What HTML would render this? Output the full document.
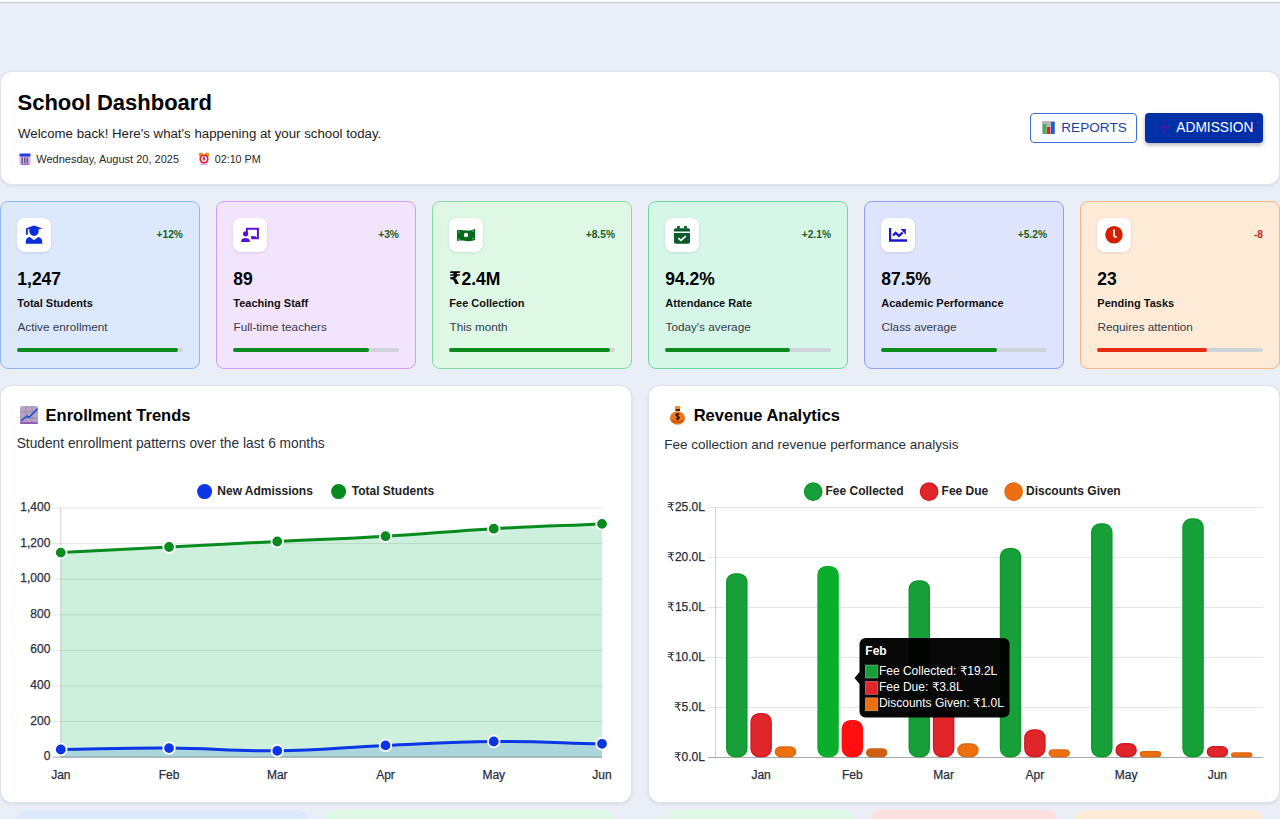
<!DOCTYPE html>
<html><head><meta charset="utf-8"><title>School Dashboard</title>
<style>
*{box-sizing:border-box;margin:0;padding:0}
html,body{width:1280px;height:819px;overflow:hidden;background:#eaeef6;font-family:"Liberation Sans",sans-serif}
.t{position:absolute;white-space:nowrap}
.abs{position:absolute}
.card{position:absolute;background:#fff;border-radius:12px;border:1px solid #dfe3ea;box-shadow:0 1px 3px rgba(20,30,60,.10)}
.stat{position:absolute;top:201px;width:200px;height:168px;border-radius:8px;border:1px solid}
.ib{position:absolute;top:16px;left:16px;width:34px;height:34px;border-radius:8px;background:#fff;box-shadow:0 1px 3px rgba(0,0,0,.10)}
.ib svg{position:absolute;left:0;top:0;width:34px;height:34px}
.trk{position:absolute;left:16px;top:146px;width:166px;height:4px;border-radius:2px;background:#cfd3da}
.fil{position:absolute;left:0;top:0;height:4px;border-radius:2px}
.rp{display:inline-block;height:0.75em;vertical-align:baseline;fill:currentColor;overflow:visible}
</style></head>
<body>
<svg width="0" height="0" style="position:absolute"><defs><path id="rr" d="M106 -1370 161 -1493H1199L1144 -1370H790Q869 -1292 890 -1163H1199L1144 -1040H898Q893 -914 832 -829Q767 -736 642 -700Q707 -678 768 -606Q827 -538 892 -408L1097 0H880L689 -383Q614 -534 546 -582Q476 -631 356 -631H136V-797H390Q536 -797 610 -864Q678 -926 684 -1040H106L161 -1163H673Q655 -1230 610 -1282Q536 -1370 390 -1370Z"/><path id="rb" d="M103 -1298 191 -1493H1325L1239 -1298H923Q955 -1242 967 -1168H1325L1239 -973H962Q945 -896 902 -838Q830 -743 686 -698Q765 -680 828 -616Q891 -552 954 -424L1163 0H753L571 -371Q516 -483 459.5 -524.0Q403 -565 309 -565H159V-831H362Q483 -831 536 -898Q562 -931 575 -973H103L191 -1168H572Q559 -1205 536 -1234Q483 -1298 362 -1298Z"/></defs></svg>
<div class="abs" style="left:0;top:0;width:1280px;height:2px;background:#fff"></div>
<div class="abs" style="left:0;top:2px;width:1280px;height:1px;background:#c6cad2"></div>
<div class="abs" style="left:0;top:3px;width:1280px;height:1px;background:#e4e8f0"></div>
<div class="card" style="left:0;top:71px;width:1280px;height:114px"></div>
<div class="t" style="top:92.13px;font-size:22px;line-height:22px;font-weight:700;color:#000;left:17.50px;">School Dashboard</div>
<div class="t" style="top:126.78px;font-size:13.25px;line-height:13.25px;font-weight:400;color:#1c1c1c;left:18.00px;">Welcome back! Here's what's happening at your school today.</div>
<svg class="abs" style="left:19px;top:153px" width="12" height="12" viewBox="0 0 12 12">
<rect x="0.5" y="1.5" width="11" height="10" rx="1" fill="#dcb0e8"/>
<rect x="0.5" y="0.5" width="11" height="3" rx="1" fill="#1d3fd8"/>
<rect x="2.5" y="4.5" width="1.5" height="6" fill="#6a5a80"/><rect x="5" y="4.5" width="1.5" height="6" fill="#6a5a80"/><rect x="7.6" y="4.5" width="1.5" height="6" fill="#6a5a80"/>
<rect x="7.6" y="6.5" width="1.6" height="2" fill="#2a70f0"/>
<rect x="2" y="10.8" width="8.5" height="1" fill="#a050d0"/>
</svg>
<div class="t" style="top:154.19px;font-size:11px;line-height:11px;font-weight:400;color:#2a2a2a;left:36.30px;">Wednesday, August 20, 2025</div>
<svg class="abs" style="left:198px;top:152px" width="12" height="13" viewBox="0 0 12 13">
<circle cx="3" cy="2.8" r="2.2" fill="#f08a1a"/><circle cx="9" cy="2.8" r="2.2" fill="#f08a1a"/>
<circle cx="6" cy="7" r="4.6" fill="#ee1c1c"/><circle cx="6" cy="7" r="3" fill="#e8e0f4"/>
<rect x="5.3" y="4.8" width="1.3" height="2.6" fill="#301030"/><rect x="5.4" y="7" width="1.6" height="1.2" fill="#e02020"/>
<rect x="2.5" y="11.6" width="7" height="1" fill="#b070e0"/>
</svg>
<div class="t" style="top:154.40px;font-size:10.75px;line-height:10.75px;font-weight:400;color:#2a2a2a;left:214.70px;">02:10 PM</div>
<div class="abs" style="left:1030px;top:113px;width:107px;height:30px;border:1px solid #3b6fd6;border-radius:4px;background:#fff"></div>
<svg class="abs" style="left:1042px;top:121px" width="13" height="13" viewBox="0 0 13 13">
<rect x="0" y="0" width="13" height="13" rx="1" fill="#b8b4bc"/>
<rect x="1" y="3" width="3.3" height="10" fill="#2cc040"/><rect x="5" y="6" width="3.3" height="7" fill="#e81e2a"/><rect x="9" y="1" width="3.6" height="12" fill="#1060e0"/>
</svg>
<div class="t" style="top:121.29px;font-size:13.6px;line-height:13.6px;font-weight:400;color:#1f3fa0;left:1061.30px;">REPORTS</div>
<div class="abs" style="left:1145px;top:113px;width:118px;height:30px;border-radius:4px;background:#0030a8;box-shadow:0 2px 4px rgba(0,0,0,.3)"></div>
<svg class="abs" style="left:1158px;top:121px" width="13" height="13" viewBox="0 0 13 13">
<rect x="5.5" y="0.5" width="2" height="12" fill="#3a1ca8"/><rect x="0.5" y="5.5" width="12" height="2" fill="#3a1ca8"/>
</svg>
<div class="t" style="top:121.16px;font-size:13.75px;line-height:13.75px;font-weight:400;color:#fff;left:1176.30px;">ADMISSION</div>
<div class="stat" style="left:0px;background:#dce9fc;border-color:#8fb6f6">
<div class="ib"><svg viewBox="0 0 34 34" fill="#0a2ed8" style="color:#0a2ed8"><path d="M8.6 10.4L17 7.6l8.4 2.8L17 12.6z"/><path d="M8.9 10.6h1.9v6.2H8.9z"/><path d="M12.3 11.2h9.4v2a4.7 4.7 0 0 1-9.4 0z"/><path d="M8.8 25.8v-2.6c0-2.2 1.6-3.9 3.9-4.3l4.3 3.4 4.3-3.4c2.3.4 3.9 2.1 3.9 4.3v2.6z"/></svg></div>
<div class="trk"><div class="fil" style="width:161.0px;background:#0b8a1e"></div></div>
</div>
<div class="t" style="top:230.02px;font-size:10.25px;line-height:10.25px;font-weight:700;color:#1b5e20;right:1097.00px;">+12%</div>
<div class="t" style="top:270.59px;font-size:17.5px;line-height:17.5px;font-weight:700;color:#000;left:17.30px;">1,247</div>
<div class="t" style="top:297.79px;font-size:11px;line-height:11px;font-weight:700;color:#111;left:17.30px;">Total Students</div>
<div class="t" style="top:321.00px;font-size:11.75px;line-height:11.75px;font-weight:400;color:#333a48;left:17.50px;">Active enrollment</div>
<div class="stat" style="left:216px;background:#f3e4fd;border-color:#cf9cf6">
<div class="ib"><svg viewBox="0 0 34 34" fill="#5a10d8" style="color:#5a10d8"><path d="M13 9.8h12.9v11.5h-7.6v-2h5.6v-7.5h-9.1v3.4H13z"/><circle cx="12.6" cy="15.8" r="2.6"/><path d="M8.2 23.9v-1.2c0-1.6 2.2-2.7 4.3-2.7s4.3 1.1 4.3 2.7v1.2z"/><path d="M18 18.2h4.8v2.3H18z"/></svg></div>
<div class="trk"><div class="fil" style="width:136.1px;background:#0b8a1e"></div></div>
</div>
<div class="t" style="top:230.02px;font-size:10.25px;line-height:10.25px;font-weight:700;color:#1b5e20;right:881.00px;">+3%</div>
<div class="t" style="top:270.59px;font-size:17.5px;line-height:17.5px;font-weight:700;color:#000;left:233.30px;">89</div>
<div class="t" style="top:297.79px;font-size:11px;line-height:11px;font-weight:700;color:#111;left:233.30px;">Teaching Staff</div>
<div class="t" style="top:321.00px;font-size:11.75px;line-height:11.75px;font-weight:400;color:#333a48;left:233.50px;">Full-time teachers</div>
<div class="stat" style="left:432px;background:#dff8e6;border-color:#86dca0">
<div class="ib"><svg viewBox="0 0 34 34" fill="#076a1a" style="color:#076a1a"><path d="M8 12.2c3-.6 5-.2 9 .2s6 .1 9-1.6v11c-3 1.4-5 1.6-9 1.2s-6-.6-9 0z"/><circle cx="17" cy="17" r="2.2" fill="#fff"/><circle cx="10" cy="14" r=".7" fill="#8de0a0"/><circle cx="24" cy="13" r=".7" fill="#8de0a0"/><circle cx="10" cy="21.3" r=".7" fill="#8de0a0"/><circle cx="24" cy="20.5" r=".7" fill="#8de0a0"/></svg></div>
<div class="trk"><div class="fil" style="width:161.0px;background:#0b8a1e"></div></div>
</div>
<div class="t" style="top:230.02px;font-size:10.25px;line-height:10.25px;font-weight:700;color:#1b5e20;right:665.00px;">+8.5%</div>
<div class="t" style="top:270.59px;font-size:17.5px;line-height:17.5px;font-weight:700;color:#000;left:449.30px;"><svg class="rp" viewBox="0 -1536 1425 1536" style="width:0.6958em"><use href="#rb"/></svg>2.4M</div>
<div class="t" style="top:297.79px;font-size:11px;line-height:11px;font-weight:700;color:#111;left:449.30px;">Fee Collection</div>
<div class="t" style="top:321.00px;font-size:11.75px;line-height:11.75px;font-weight:400;color:#333a48;left:449.50px;">This month</div>
<div class="stat" style="left:648px;background:#d6f7e8;border-color:#6fd69c">
<div class="ib"><svg viewBox="0 0 34 34" fill="#0b5a2a" style="color:#0b5a2a"><path d="M12.1 8h2.7v2.6h-2.7zM19.1 8h2.8v2.6h-2.8z"/><path d="M9 12a1.8 1.8 0 0 1 1.8-1.8h12.4A1.8 1.8 0 0 1 25 12v1.6H9z"/><path d="M9 15h16v9a1.8 1.8 0 0 1-1.8 1.8H10.8A1.8 1.8 0 0 1 9 24z"/><path d="M13.3 20.1l2.6 2.3 4.9-4.3" stroke="#fff" stroke-width="1.7" fill="none"/></svg></div>
<div class="trk"><div class="fil" style="width:124.5px;background:#0b8a1e"></div></div>
</div>
<div class="t" style="top:230.02px;font-size:10.25px;line-height:10.25px;font-weight:700;color:#1b5e20;right:449.00px;">+2.1%</div>
<div class="t" style="top:270.59px;font-size:17.5px;line-height:17.5px;font-weight:700;color:#000;left:665.30px;">94.2%</div>
<div class="t" style="top:297.79px;font-size:11px;line-height:11px;font-weight:700;color:#111;left:665.30px;">Attendance Rate</div>
<div class="t" style="top:321.00px;font-size:11.75px;line-height:11.75px;font-weight:400;color:#333a48;left:665.50px;">Today's average</div>
<div class="stat" style="left:864px;background:#dee4fc;border-color:#8c9ff4">
<div class="ib"><svg viewBox="0 0 34 34" fill="#1818d0" style="color:#1818d0"><path d="M8 9.9h2.2v11.3H26v2.6H8z"/><path d="M12 17.5l2.6-2.6 3.4 3 3.6-3.4" stroke="currentColor" stroke-width="2.3" fill="none"/><path d="M19.6 10.9h5.2v5.9z"/></svg></div>
<div class="trk"><div class="fil" style="width:116.2px;background:#0b8a1e"></div></div>
</div>
<div class="t" style="top:230.02px;font-size:10.25px;line-height:10.25px;font-weight:700;color:#1b5e20;right:233.00px;">+5.2%</div>
<div class="t" style="top:270.59px;font-size:17.5px;line-height:17.5px;font-weight:700;color:#000;left:881.30px;">87.5%</div>
<div class="t" style="top:297.79px;font-size:11px;line-height:11px;font-weight:700;color:#111;left:881.30px;">Academic Performance</div>
<div class="t" style="top:321.00px;font-size:11.75px;line-height:11.75px;font-weight:400;color:#333a48;left:881.50px;">Class average</div>
<div class="stat" style="left:1080px;background:#fdebd8;border-color:#f5b682">
<div class="ib"><svg viewBox="0 0 34 34" fill="#d42000" style="color:#d42000"><circle cx="17" cy="16.8" r="8.8"/><path d="M17 11.6v6.3l2.5 1.6" stroke="#fff" stroke-width="1.8" fill="none"/></svg></div>
<div class="trk"><div class="fil" style="width:109.6px;background:#e82a10"></div></div>
</div>
<div class="t" style="top:230.02px;font-size:10.25px;line-height:10.25px;font-weight:700;color:#c0281c;right:17.00px;">-8</div>
<div class="t" style="top:270.59px;font-size:17.5px;line-height:17.5px;font-weight:700;color:#000;left:1097.30px;">23</div>
<div class="t" style="top:297.79px;font-size:11px;line-height:11px;font-weight:700;color:#111;left:1097.30px;">Pending Tasks</div>
<div class="t" style="top:321.00px;font-size:11.75px;line-height:11.75px;font-weight:400;color:#333a48;left:1097.50px;">Requires attention</div>
<div class="card" style="left:0;top:385px;width:632px;height:418px"></div>
<div class="card" style="left:648px;top:385px;width:632px;height:418px"></div>
<div class="t" style="top:407.48px;font-size:16.5px;line-height:16.5px;font-weight:700;color:#000;left:45.60px;">Enrollment Trends</div>
<div class="t" style="top:437.46px;font-size:13.75px;line-height:13.75px;font-weight:400;color:#2a2f3a;left:16.70px;">Student enrollment patterns over the last 6 months</div>
<div class="t" style="top:407.48px;font-size:16.5px;line-height:16.5px;font-weight:700;color:#000;left:693.70px;">Revenue Analytics</div>
<div class="t" style="top:437.67px;font-size:13.5px;line-height:13.5px;font-weight:400;color:#2a2f3a;left:664.30px;">Fee collection and revenue performance analysis</div>
<svg class="abs" style="left:20px;top:406px" width="18" height="18" viewBox="0 0 18 18">
<rect x="0" y="0" width="18" height="18" rx="2" fill="#b6a4c4"/>
<path d="M0 6h18M0 12h18M6 0v18M12 0v18" stroke="#9a86ae" stroke-width="0.8"/>
<rect x="0" y="16" width="18" height="2" rx="1" fill="#9060b0"/>
<path d="M1 15L7 10L9 11.5L17.5 2.5" stroke="#1a50d0" stroke-width="1.6" fill="none"/>
</svg>
<svg class="abs" style="left:669px;top:405px" width="17" height="20" viewBox="0 0 17 20">
<ellipse cx="8.5" cy="13" rx="7.6" ry="6.8" fill="#e8781a"/>
<path d="M3 15c2 3 9 3 11 0" stroke="#c85010" stroke-width="1.5" fill="none"/>
<rect x="6" y="1" width="5.4" height="3.2" rx="1.4" fill="#f08a2a"/>
<rect x="6.4" y="4" width="4.6" height="2" fill="#5a1a0a"/>
<path d="M10.3 9.5c-.4-.9-3.4-1-3.3.6.1 1.5 3.4 1 3.4 2.7 0 1.6-3 1.6-3.6.5M8.6 8v8" stroke="#3a0c06" stroke-width="1.1" fill="none"/>
</svg>
<svg class="abs" style="left:0;top:0" width="640" height="819" viewBox="0 0 640 819">
<path d="M60.80 552.60 C104.10 550.36 125.74 549.22 169.04 547.00 C212.33 544.78 233.98 543.66 277.28 541.50 C320.57 539.34 342.25 538.76 385.52 536.20 C428.84 533.64 450.43 531.16 493.76 528.70 C537.03 526.24 558.70 525.82 602.00 523.90 L602.00 757.2 L60.80 757.2 Z" fill="#cdf0dc"/>
<path d="M60.80 749.50 C104.10 748.94 125.75 747.84 169.04 748.10 C212.34 748.36 234.00 751.34 277.28 750.80 C320.60 750.26 342.21 747.26 385.52 745.40 C428.80 743.54 450.45 741.82 493.76 741.50 C537.05 741.18 558.70 742.88 602.00 743.80 L602.00 757.2 L60.80 757.2 Z" fill="#aad6dc"/>
<path d="M53 757.20H602.00" stroke="rgba(0,0,0,0.1)" stroke-width="1"/>
<path d="M53 721.60H602.00" stroke="rgba(0,0,0,0.1)" stroke-width="1"/>
<path d="M53 686.00H602.00" stroke="rgba(0,0,0,0.1)" stroke-width="1"/>
<path d="M53 650.40H602.00" stroke="rgba(0,0,0,0.1)" stroke-width="1"/>
<path d="M53 614.80H602.00" stroke="rgba(0,0,0,0.1)" stroke-width="1"/>
<path d="M53 579.20H602.00" stroke="rgba(0,0,0,0.1)" stroke-width="1"/>
<path d="M53 543.60H602.00" stroke="rgba(0,0,0,0.1)" stroke-width="1"/>
<path d="M53 508.00H602.00" stroke="rgba(0,0,0,0.1)" stroke-width="1"/>
<path d="M60.80 508V757.70" stroke="rgba(0,0,0,0.18)" stroke-width="1"/>
<path d="M53 757.20H602.00" stroke="rgba(0,0,0,0.25)" stroke-width="1"/>
<path d="M60.80 552.60 C104.10 550.36 125.74 549.22 169.04 547.00 C212.33 544.78 233.98 543.66 277.28 541.50 C320.57 539.34 342.25 538.76 385.52 536.20 C428.84 533.64 450.43 531.16 493.76 528.70 C537.03 526.24 558.70 525.82 602.00 523.90" stroke="#078a1e" stroke-width="3" fill="none"/>
<path d="M60.80 749.50 C104.10 748.94 125.75 747.84 169.04 748.10 C212.34 748.36 234.00 751.34 277.28 750.80 C320.60 750.26 342.21 747.26 385.52 745.40 C428.80 743.54 450.45 741.82 493.76 741.50 C537.05 741.18 558.70 742.88 602.00 743.80" stroke="#0a36e6" stroke-width="3" fill="none"/>
<circle cx="60.80" cy="552.60" r="5.8" fill="#078a1e" stroke="#fff" stroke-width="1.8"/>
<circle cx="169.04" cy="547.00" r="5.8" fill="#078a1e" stroke="#fff" stroke-width="1.8"/>
<circle cx="277.28" cy="541.50" r="5.8" fill="#078a1e" stroke="#fff" stroke-width="1.8"/>
<circle cx="385.52" cy="536.20" r="5.8" fill="#078a1e" stroke="#fff" stroke-width="1.8"/>
<circle cx="493.76" cy="528.70" r="5.8" fill="#078a1e" stroke="#fff" stroke-width="1.8"/>
<circle cx="602.00" cy="523.90" r="5.8" fill="#078a1e" stroke="#fff" stroke-width="1.8"/>
<circle cx="60.80" cy="749.50" r="5.8" fill="#0a36e6" stroke="#fff" stroke-width="1.8"/>
<circle cx="169.04" cy="748.10" r="5.8" fill="#0a36e6" stroke="#fff" stroke-width="1.8"/>
<circle cx="277.28" cy="750.80" r="5.8" fill="#0a36e6" stroke="#fff" stroke-width="1.8"/>
<circle cx="385.52" cy="745.40" r="5.8" fill="#0a36e6" stroke="#fff" stroke-width="1.8"/>
<circle cx="493.76" cy="741.50" r="5.8" fill="#0a36e6" stroke="#fff" stroke-width="1.8"/>
<circle cx="602.00" cy="743.80" r="5.8" fill="#0a36e6" stroke="#fff" stroke-width="1.8"/>
<circle cx="204.6" cy="491.6" r="7.5" fill="#0a36e6"/>
<circle cx="338.6" cy="491.6" r="7.5" fill="#078a1e"/>
</svg>
<div class="t" style="top:485.04px;font-size:12px;line-height:12px;font-weight:700;color:#222;left:217.30px;">New Admissions</div>
<div class="t" style="top:485.04px;font-size:12px;line-height:12px;font-weight:700;color:#222;left:351.70px;">Total Students</div>
<div class="t" style="top:750.24px;font-size:12px;line-height:12px;font-weight:400;color:#283040;right:1229.70px;-webkit-text-stroke:0.25px #283040;">0</div>
<div class="t" style="top:714.64px;font-size:12px;line-height:12px;font-weight:400;color:#283040;right:1229.70px;-webkit-text-stroke:0.25px #283040;">200</div>
<div class="t" style="top:679.04px;font-size:12px;line-height:12px;font-weight:400;color:#283040;right:1229.70px;-webkit-text-stroke:0.25px #283040;">400</div>
<div class="t" style="top:643.44px;font-size:12px;line-height:12px;font-weight:400;color:#283040;right:1229.70px;-webkit-text-stroke:0.25px #283040;">600</div>
<div class="t" style="top:607.84px;font-size:12px;line-height:12px;font-weight:400;color:#283040;right:1229.70px;-webkit-text-stroke:0.25px #283040;">800</div>
<div class="t" style="top:572.24px;font-size:12px;line-height:12px;font-weight:400;color:#283040;right:1229.70px;-webkit-text-stroke:0.25px #283040;">1,000</div>
<div class="t" style="top:536.64px;font-size:12px;line-height:12px;font-weight:400;color:#283040;right:1229.70px;-webkit-text-stroke:0.25px #283040;">1,200</div>
<div class="t" style="top:501.04px;font-size:12px;line-height:12px;font-weight:400;color:#283040;right:1229.70px;-webkit-text-stroke:0.25px #283040;">1,400</div>
<div class="t" style="top:769.04px;font-size:12px;line-height:12px;font-weight:400;color:#283040;left:-239.20px;width:600px;text-align:center;-webkit-text-stroke:0.25px #283040;">Jan</div>
<div class="t" style="top:769.04px;font-size:12px;line-height:12px;font-weight:400;color:#283040;left:-130.96px;width:600px;text-align:center;-webkit-text-stroke:0.25px #283040;">Feb</div>
<div class="t" style="top:769.04px;font-size:12px;line-height:12px;font-weight:400;color:#283040;left:-22.72px;width:600px;text-align:center;-webkit-text-stroke:0.25px #283040;">Mar</div>
<div class="t" style="top:769.04px;font-size:12px;line-height:12px;font-weight:400;color:#283040;left:85.52px;width:600px;text-align:center;-webkit-text-stroke:0.25px #283040;">Apr</div>
<div class="t" style="top:769.04px;font-size:12px;line-height:12px;font-weight:400;color:#283040;left:193.76px;width:600px;text-align:center;-webkit-text-stroke:0.25px #283040;">May</div>
<div class="t" style="top:769.04px;font-size:12px;line-height:12px;font-weight:400;color:#283040;left:302.00px;width:600px;text-align:center;-webkit-text-stroke:0.25px #283040;">Jun</div>
<svg class="abs" style="left:0;top:0" width="1280" height="819" viewBox="0 0 1280 819">
<path d="M708 757.50H1263.00" stroke="rgba(0,0,0,0.1)" stroke-width="1"/>
<path d="M708 707.50H1263.00" stroke="rgba(0,0,0,0.1)" stroke-width="1"/>
<path d="M708 657.50H1263.00" stroke="rgba(0,0,0,0.1)" stroke-width="1"/>
<path d="M708 607.50H1263.00" stroke="rgba(0,0,0,0.1)" stroke-width="1"/>
<path d="M708 557.50H1263.00" stroke="rgba(0,0,0,0.1)" stroke-width="1"/>
<path d="M708 507.50H1263.00" stroke="rgba(0,0,0,0.1)" stroke-width="1"/>
<path d="M715.50 507.5V757.50" stroke="rgba(0,0,0,0.18)" stroke-width="1"/>
<rect x="726.79" y="574.00" width="20" height="182.50" rx="8.00" fill="#17a03a" stroke="#0d9a2c" stroke-width="1.5"/>
<rect x="751.12" y="713.80" width="20" height="42.70" rx="8.00" fill="#e0262b" stroke="#d41a20" stroke-width="1.5"/>
<rect x="775.46" y="746.90" width="20" height="9.60" rx="5.30" fill="#ec700f" stroke="#e06810" stroke-width="1.5"/>
<rect x="818.04" y="566.80" width="20" height="189.70" rx="8.00" fill="#0aae2a" stroke="#0aae2a" stroke-width="1.5"/>
<rect x="842.38" y="720.70" width="20" height="35.80" rx="8.00" fill="#ff0f0f" stroke="#ff0f0f" stroke-width="1.5"/>
<rect x="866.71" y="748.90" width="20" height="7.60" rx="4.30" fill="#cc6015" stroke="#cc6015" stroke-width="1.5"/>
<rect x="909.29" y="581.00" width="20" height="175.50" rx="8.00" fill="#17a03a" stroke="#0d9a2c" stroke-width="1.5"/>
<rect x="933.62" y="708.50" width="20" height="48.00" rx="8.00" fill="#e0262b" stroke="#d41a20" stroke-width="1.5"/>
<rect x="957.96" y="744.00" width="20" height="12.50" rx="6.75" fill="#ec700f" stroke="#e06810" stroke-width="1.5"/>
<rect x="1000.54" y="548.80" width="20" height="207.70" rx="8.00" fill="#17a03a" stroke="#0d9a2c" stroke-width="1.5"/>
<rect x="1024.88" y="730.00" width="20" height="26.50" rx="8.00" fill="#e0262b" stroke="#d41a20" stroke-width="1.5"/>
<rect x="1049.20" y="749.90" width="20" height="6.60" rx="3.80" fill="#ec700f" stroke="#e06810" stroke-width="1.5"/>
<rect x="1091.80" y="524.10" width="20" height="232.40" rx="8.00" fill="#17a03a" stroke="#0d9a2c" stroke-width="1.5"/>
<rect x="1116.12" y="743.80" width="20" height="12.70" rx="6.85" fill="#e0262b" stroke="#d41a20" stroke-width="1.5"/>
<rect x="1140.45" y="751.80" width="20" height="4.70" rx="2.85" fill="#ec700f" stroke="#e06810" stroke-width="1.5"/>
<rect x="1183.05" y="519.10" width="20" height="237.40" rx="8.00" fill="#17a03a" stroke="#0d9a2c" stroke-width="1.5"/>
<rect x="1207.38" y="746.80" width="20" height="9.70" rx="5.35" fill="#e0262b" stroke="#d41a20" stroke-width="1.5"/>
<rect x="1231.70" y="752.90" width="20" height="3.60" rx="2.30" fill="#ec700f" stroke="#e06810" stroke-width="1.5"/>
<path d="M708 757.50H1263.00" stroke="rgba(0,0,0,0.25)" stroke-width="1"/>
<circle cx="813.2" cy="491.7" r="8.6" fill="#17a03a" stroke="#0d9a2c" stroke-width="1.5"/>
<circle cx="929.1" cy="491.7" r="8.6" fill="#e0262b" stroke="#d41a20" stroke-width="1.5"/>
<circle cx="1013.6" cy="491.7" r="8.6" fill="#ec700f" stroke="#e06810" stroke-width="1.5"/>
<path d="M865.5 638h138a6 6 0 0 1 6 6v67.5a6 6 0 0 1-6 6h-138a6 6 0 0 1-6-6v-27.5l-5-6 5-6v-28a6 6 0 0 1 6-6z" fill="rgba(0,0,0,0.97)"/>
<rect x="865.3" y="665.00" width="12.6" height="13" fill="#17a03a" stroke="#fff" stroke-width="0.6" stroke-opacity="0.5"/>
<rect x="865.3" y="681.40" width="12.6" height="13" fill="#e0262b" stroke="#fff" stroke-width="0.6" stroke-opacity="0.5"/>
<rect x="865.3" y="697.80" width="12.6" height="13" fill="#ec700f" stroke="#fff" stroke-width="0.6" stroke-opacity="0.5"/>
</svg>
<div class="t" style="top:485.04px;font-size:12px;line-height:12px;font-weight:700;color:#222;left:825.50px;">Fee Collected</div>
<div class="t" style="top:485.04px;font-size:12px;line-height:12px;font-weight:700;color:#222;left:941.60px;">Fee Due</div>
<div class="t" style="top:485.04px;font-size:12px;line-height:12px;font-weight:700;color:#222;left:1026.00px;">Discounts Given</div>
<div class="t" style="top:750.54px;font-size:12px;line-height:12px;font-weight:400;color:#283040;right:575.10px;-webkit-text-stroke:0.25px #283040;"><svg class="rp" viewBox="0 -1536 1303 1536" style="width:0.6362em"><use href="#rr"/></svg>0.0L</div>
<div class="t" style="top:700.54px;font-size:12px;line-height:12px;font-weight:400;color:#283040;right:575.10px;-webkit-text-stroke:0.25px #283040;"><svg class="rp" viewBox="0 -1536 1303 1536" style="width:0.6362em"><use href="#rr"/></svg>5.0L</div>
<div class="t" style="top:650.54px;font-size:12px;line-height:12px;font-weight:400;color:#283040;right:575.10px;-webkit-text-stroke:0.25px #283040;"><svg class="rp" viewBox="0 -1536 1303 1536" style="width:0.6362em"><use href="#rr"/></svg>10.0L</div>
<div class="t" style="top:600.54px;font-size:12px;line-height:12px;font-weight:400;color:#283040;right:575.10px;-webkit-text-stroke:0.25px #283040;"><svg class="rp" viewBox="0 -1536 1303 1536" style="width:0.6362em"><use href="#rr"/></svg>15.0L</div>
<div class="t" style="top:550.54px;font-size:12px;line-height:12px;font-weight:400;color:#283040;right:575.10px;-webkit-text-stroke:0.25px #283040;"><svg class="rp" viewBox="0 -1536 1303 1536" style="width:0.6362em"><use href="#rr"/></svg>20.0L</div>
<div class="t" style="top:500.54px;font-size:12px;line-height:12px;font-weight:400;color:#283040;right:575.10px;-webkit-text-stroke:0.25px #283040;"><svg class="rp" viewBox="0 -1536 1303 1536" style="width:0.6362em"><use href="#rr"/></svg>25.0L</div>
<div class="t" style="top:769.04px;font-size:12px;line-height:12px;font-weight:400;color:#283040;left:461.12px;width:600px;text-align:center;-webkit-text-stroke:0.25px #283040;">Jan</div>
<div class="t" style="top:769.04px;font-size:12px;line-height:12px;font-weight:400;color:#283040;left:552.38px;width:600px;text-align:center;-webkit-text-stroke:0.25px #283040;">Feb</div>
<div class="t" style="top:769.04px;font-size:12px;line-height:12px;font-weight:400;color:#283040;left:643.62px;width:600px;text-align:center;-webkit-text-stroke:0.25px #283040;">Mar</div>
<div class="t" style="top:769.04px;font-size:12px;line-height:12px;font-weight:400;color:#283040;left:734.88px;width:600px;text-align:center;-webkit-text-stroke:0.25px #283040;">Apr</div>
<div class="t" style="top:769.04px;font-size:12px;line-height:12px;font-weight:400;color:#283040;left:826.12px;width:600px;text-align:center;-webkit-text-stroke:0.25px #283040;">May</div>
<div class="t" style="top:769.04px;font-size:12px;line-height:12px;font-weight:400;color:#283040;left:917.38px;width:600px;text-align:center;-webkit-text-stroke:0.25px #283040;">Jun</div>
<div class="t" style="top:644.74px;font-size:12px;line-height:12px;font-weight:700;color:#fff;left:865.30px;">Feb</div>
<div class="t" style="top:664.64px;font-size:12px;line-height:12px;font-weight:400;color:#fff;left:878.90px;">Fee Collected: <svg class="rp" viewBox="0 -1536 1303 1536" style="width:0.6362em"><use href="#rr"/></svg>19.2L</div>
<div class="t" style="top:681.04px;font-size:12px;line-height:12px;font-weight:400;color:#fff;left:878.90px;">Fee Due: <svg class="rp" viewBox="0 -1536 1303 1536" style="width:0.6362em"><use href="#rr"/></svg>3.8L</div>
<div class="t" style="top:697.44px;font-size:12px;line-height:12px;font-weight:400;color:#fff;left:878.90px;">Discounts Given: <svg class="rp" viewBox="0 -1536 1303 1536" style="width:0.6362em"><use href="#rr"/></svg>1.0L</div>
<div class="abs" style="left:17px;top:810px;width:290.5px;height:30px;border-radius:10px;background:#dde9fc"></div>
<div class="abs" style="left:324px;top:810px;width:290.0px;height:30px;border-radius:10px;background:#dff8e6"></div>
<div class="abs" style="left:665px;top:810px;width:189.0px;height:30px;border-radius:10px;background:#dff8e6"></div>
<div class="abs" style="left:870px;top:810px;width:187.5px;height:30px;border-radius:10px;background:#fde1e1"></div>
<div class="abs" style="left:1074px;top:810px;width:188.5px;height:30px;border-radius:10px;background:#fdebd8"></div>
</body></html>
